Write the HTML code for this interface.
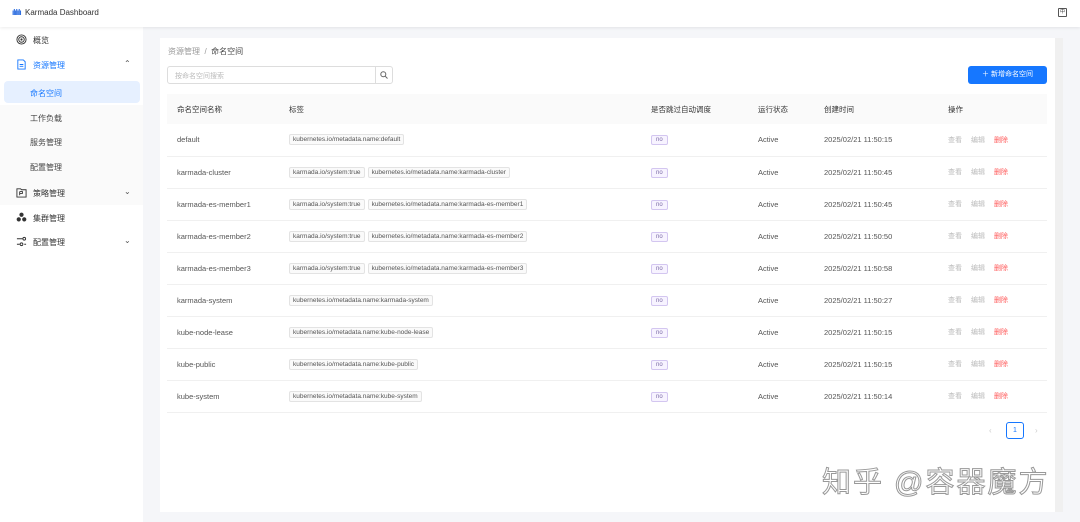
<!DOCTYPE html>
<html><head><meta charset="utf-8"><style>
*{box-sizing:border-box;margin:0;padding:0}
body{width:1080px;height:522px;overflow:hidden;background:#f5f6f9;font-family:"Liberation Sans","Noto Sans CJK SC",sans-serif;color:#333;position:relative;font-size:8px}
.hdr{position:absolute;left:0;top:0;width:1080px;height:27px;background:#fff;box-shadow:0 1px 3px rgba(0,0,0,.08);z-index:2}
.logo{position:absolute;left:12px;top:8px;font-size:8px;color:#333}
.side{position:absolute;left:0;top:27px;width:143px;height:495px;background:#fff}
.mi{position:absolute;left:0;width:143px;height:24px;font-size:8px;color:#333}
.mi .ic{position:absolute;left:16px;top:6px;width:11px;height:11px}
.mi .t{position:absolute;left:33px;top:7px}
.mi .ar{position:absolute;left:124px;top:6px;font-size:8px;color:#555}
.sub{position:absolute;left:0;top:78px;width:143px;height:100px;background:#fafafa}
.si{position:absolute;left:30px;font-size:8px;color:#444}
.card{position:absolute;left:160px;top:38px;width:895px;height:474px;background:#fff}
.sb{position:absolute;left:1055px;top:38px;width:8px;height:474px;background:#f0f0f0}
table{position:absolute;left:167px;top:94px;width:880px;border-collapse:collapse;font-size:7.5px}
th{height:30px;background:#fafafa;text-align:left;font-weight:normal;color:#333;padding-left:10px}
td{height:32px;border-bottom:1px solid #f0f0f0;padding-left:10px;color:#555}
.tg{display:inline-block;border:1px solid #e3e3e3;background:#fafafa;border-radius:2px;padding:1px 3px;font-size:6.5px;color:#555;margin-right:3px}
.no{display:inline-block;border:1px solid #d3c6f0;background:#f7f3ff;border-radius:2px;padding:1px 4px;font-size:6px;color:#7a6aa5}
.op{color:#bbb;margin-right:9px;font-size:7px}.del{color:#ff5a5a;font-size:7px}
</style></head><body>
<div class="hdr"><div class="logo"><span style="color:#2f6fe0;font-weight:bold;letter-spacing:-1px">ılılılı</span>&nbsp; Karmada Dashboard</div>
<div style="position:absolute;left:1058px;top:8px;width:9px;height:9px;border:1px solid #555;border-radius:1px;font-size:5px;text-align:center;line-height:7px">中</div></div>
<div class="side">
<div class="mi" style="top:1px"><svg class="ic" viewBox="0 0 12 12"><circle cx="6" cy="6" r="5" fill="none" stroke="#333"/><circle cx="6" cy="6" r="3" fill="none" stroke="#333"/><circle cx="6" cy="6" r="1.2" fill="#333"/></svg><span class="t">概览</span></div>
<div class="mi" style="top:26px;color:#1677ff"><svg class="ic" viewBox="0 0 12 12"><path d="M2 1h6l2 2v8H2z M4 6h4M4 8h4" fill="none" stroke="#1677ff"/></svg><span class="t">资源管理</span><span class="ar">⌃</span></div>
<div class="sub"></div>
<div style="position:absolute;left:4px;top:54px;width:136px;height:22px;background:#e6f0ff;border-radius:4px"></div>
<div class="si" style="top:61px;color:#1677ff">命名空间</div>
<div class="si" style="top:86px">工作负载</div>
<div class="si" style="top:110px">服务管理</div>
<div class="si" style="top:135px">配置管理</div>
<div class="mi" style="top:154px"><svg class="ic" viewBox="0 0 12 12"><path d="M1 2h4l1 1h5v8H1z M4 5v4M4 5h3v2H4" fill="none" stroke="#333"/></svg><span class="t">策略管理</span><span class="ar">⌄</span></div>
<div class="mi" style="top:179px"><svg class="ic" viewBox="0 0 12 12"><circle cx="6" cy="3" r="2.3" fill="#333"/><circle cx="3" cy="8" r="2.3" fill="#333"/><circle cx="9" cy="8" r="2.3" fill="#333"/></svg><span class="t">集群管理</span></div>
<div class="mi" style="top:203px"><svg class="ic" viewBox="0 0 12 12"><path d="M1 3h6M1 9h3M9 9h2" stroke="#333"/><circle cx="9" cy="3" r="1.5" fill="none" stroke="#333"/><circle cx="6" cy="9" r="1.5" fill="none" stroke="#333"/></svg><span class="t">配置管理</span><span class="ar">⌄</span></div>
</div>
<div class="card"></div><div class="sb"></div>
<div style="position:absolute;left:168px;top:46px;font-size:8px;color:#999">资源管理 &nbsp;/&nbsp; <span style="color:#444">命名空间</span></div>
<div style="position:absolute;left:167px;top:66px;width:226px;height:18px;border:1px solid #ddd;border-radius:3px"><span style="position:absolute;left:7px;top:4px;font-size:7px;color:#bbb">按命名空间搜索</span><div style="position:absolute;left:207px;top:0;width:1px;height:16px;background:#ddd"></div><svg style="position:absolute;left:212px;top:4px" width="8" height="8" viewBox="0 0 8 8"><circle cx="3.3" cy="3.3" r="2.5" fill="none" stroke="#666"/><path d="M5.2 5.2L7.5 7.5" stroke="#666"/></svg></div>
<div style="position:absolute;left:968px;top:66px;width:79px;height:18px;background:#1677ff;border-radius:3px;color:#fff;font-size:7px;line-height:18px;text-align:center">＋ 新增命名空间</div>
<table>
<tr><th style="width:112px">命名空间名称</th><th style="width:362px">标签</th><th style="width:107px">是否跳过自动调度</th><th style="width:66px">运行状态</th><th style="width:124px">创建时间</th><th>操作</th></tr>
<tr><td>default</td><td><span class="tg">kubernetes.io/metadata.name:default</span></td><td><span class="no">no</span></td><td>Active</td><td>2025/02/21 11:50:15</td><td><span class="op">查看</span><span class="op">编辑</span><span class="del">删除</span></td></tr>
<tr><td>karmada-cluster</td><td><span class="tg">karmada.io/system:true</span><span class="tg">kubernetes.io/metadata.name:karmada-cluster</span></td><td><span class="no">no</span></td><td>Active</td><td>2025/02/21 11:50:45</td><td><span class="op">查看</span><span class="op">编辑</span><span class="del">删除</span></td></tr>
<tr><td>karmada-es-member1</td><td><span class="tg">karmada.io/system:true</span><span class="tg">kubernetes.io/metadata.name:karmada-es-member1</span></td><td><span class="no">no</span></td><td>Active</td><td>2025/02/21 11:50:45</td><td><span class="op">查看</span><span class="op">编辑</span><span class="del">删除</span></td></tr>
<tr><td>karmada-es-member2</td><td><span class="tg">karmada.io/system:true</span><span class="tg">kubernetes.io/metadata.name:karmada-es-member2</span></td><td><span class="no">no</span></td><td>Active</td><td>2025/02/21 11:50:50</td><td><span class="op">查看</span><span class="op">编辑</span><span class="del">删除</span></td></tr>
<tr><td>karmada-es-member3</td><td><span class="tg">karmada.io/system:true</span><span class="tg">kubernetes.io/metadata.name:karmada-es-member3</span></td><td><span class="no">no</span></td><td>Active</td><td>2025/02/21 11:50:58</td><td><span class="op">查看</span><span class="op">编辑</span><span class="del">删除</span></td></tr>
<tr><td>karmada-system</td><td><span class="tg">kubernetes.io/metadata.name:karmada-system</span></td><td><span class="no">no</span></td><td>Active</td><td>2025/02/21 11:50:27</td><td><span class="op">查看</span><span class="op">编辑</span><span class="del">删除</span></td></tr>
<tr><td>kube-node-lease</td><td><span class="tg">kubernetes.io/metadata.name:kube-node-lease</span></td><td><span class="no">no</span></td><td>Active</td><td>2025/02/21 11:50:15</td><td><span class="op">查看</span><span class="op">编辑</span><span class="del">删除</span></td></tr>
<tr><td>kube-public</td><td><span class="tg">kubernetes.io/metadata.name:kube-public</span></td><td><span class="no">no</span></td><td>Active</td><td>2025/02/21 11:50:15</td><td><span class="op">查看</span><span class="op">编辑</span><span class="del">删除</span></td></tr>
<tr><td>kube-system</td><td><span class="tg">kubernetes.io/metadata.name:kube-system</span></td><td><span class="no">no</span></td><td>Active</td><td>2025/02/21 11:50:14</td><td><span class="op">查看</span><span class="op">编辑</span><span class="del">删除</span></td></tr>
</table>
<div style="position:absolute;left:989px;top:426px;font-size:8px;color:#ccc">‹</div>
<div style="position:absolute;left:1006px;top:422px;width:18px;height:17px;border:1px solid #1677ff;border-radius:3px;font-size:7px;text-align:center;line-height:15px;color:#1677ff">1</div>
<div style="position:absolute;left:1035px;top:426px;font-size:8px;color:#ccc">›</div>
<div style="position:absolute;left:822px;top:459px;font-size:29px;color:#fff;-webkit-text-stroke:1px #999;letter-spacing:2px">知乎 @容器魔方</div>
</body></html>
